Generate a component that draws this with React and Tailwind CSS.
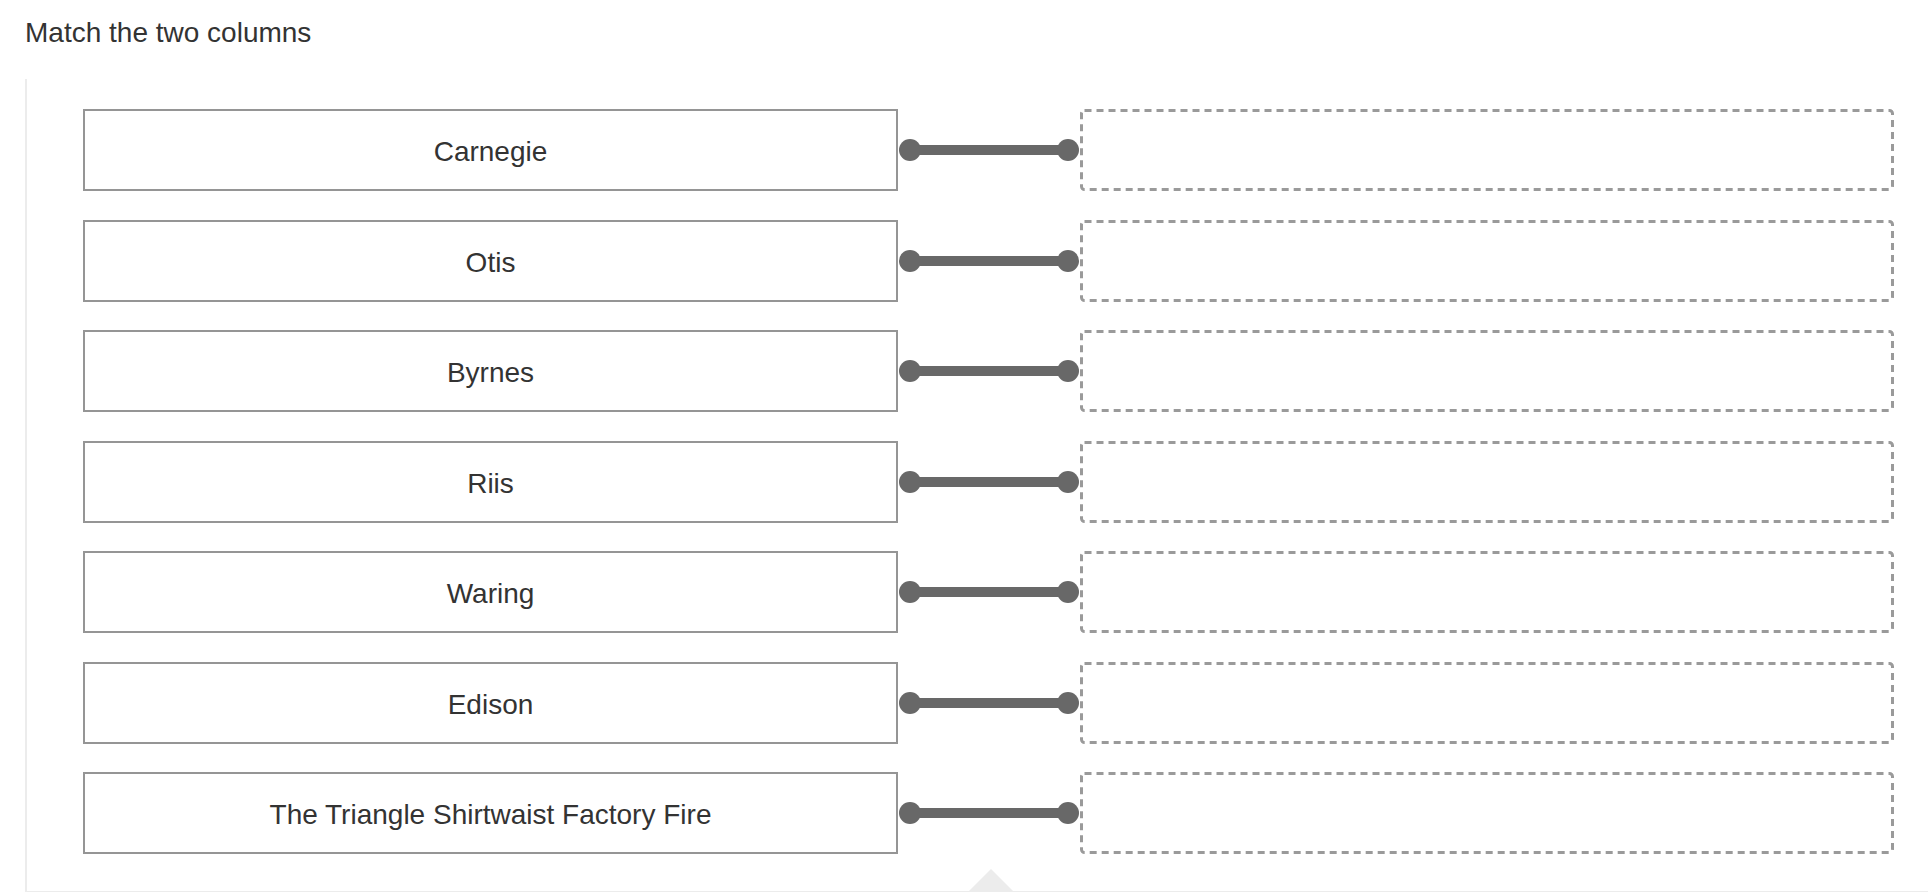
import React from 'react';

const prompts = [
  'Carnegie',
  'Otis',
  'Byrnes',
  'Riis',
  'Waring',
  'Edison',
  'The Triangle Shirtwaist Factory Fire',
];

function Connector() {
  return (
    <div className="w-[182px] flex items-center px-[1px]">
      <div className="w-[22px] h-[22px] rounded-full bg-[#686868] shrink-0" />
      <div className="flex-1 h-[10px] bg-[#686868] -mx-[2px]" />
      <div className="w-[22px] h-[22px] rounded-full bg-[#686868] shrink-0" />
    </div>
  );
}

// empty drop target, dashed outline drawn so the dash rhythm stays 7/5
function DropZone() {
  return (
    <div className="relative w-[814px] h-[82px] shrink-0">
      <svg className="absolute inset-0" width="814" height="82" viewBox="0 0 814 82">
        <rect
          x="1.5"
          y="1.5"
          width="811"
          height="79"
          rx="3"
          fill="none"
          stroke="#9a9a9a"
          strokeWidth="3"
          strokeDasharray="7 5"
        />
      </svg>
    </div>
  );
}

function MatchRow({ label }) {
  return (
    <div className="flex items-center">
      <div className="w-[815px] h-[82px] border-2 border-[#959595] pt-[4px] flex items-center justify-center text-[28px] leading-[32px] text-[#333]">
        {label}
      </div>
      <Connector />
      <DropZone />
    </div>
  );
}

export default function App() {
  return (
    <div className="bg-white min-h-[892px] pl-[25px] pt-[17px] font-['Liberation_Sans',Arial,sans-serif]">
      <h1 className="text-[28px] leading-[32px] text-[#333] font-normal">Match the two columns</h1>
      <div className="relative mt-[30px] border-l-2 border-b-2 border-[#ececec] pl-[56px] pr-[34px] pt-[30px] pb-[37px]">
        <div className="flex flex-col gap-[28.5px]">
          {prompts.map((p) => (
            <MatchRow key={p} label={p} />
          ))}
        </div>
        <div className="absolute bottom-0 left-[942px] w-0 h-0 border-l-[22px] border-r-[22px] border-b-[22px] border-l-transparent border-r-transparent border-b-[#ececec]" />
      </div>
    </div>
  );
}
